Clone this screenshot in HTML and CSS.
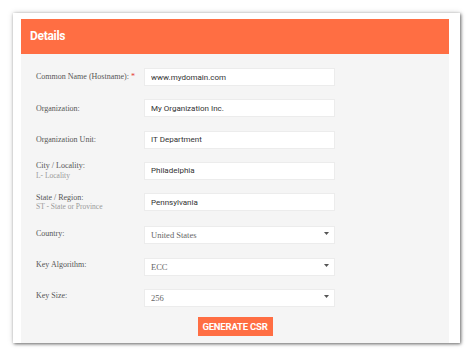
FILE: index.html
```html
<!DOCTYPE html>
<html lang="en">
<head>
    <meta charset="UTF-8">
    <title>Generate CSR</title>
    <link rel="stylesheet" href="styles.css">
</head>
<body>
    <div class="frame">
        <div class="header">Details</div>
        <form class="panel">
            <div class="row">
                <label class="label">Common Name (Hostname): <span class="req">*</span></label>
                <input class="field" type="text" value="www.mydomain.com">
            </div>
            <div class="row">
                <label class="label">Organization:</label>
                <input class="field" type="text" value="My Organization Inc.">
            </div>
            <div class="row">
                <label class="label">Organization Unit:</label>
                <input class="field" type="text" value="IT Department">
            </div>
            <div class="row">
                <label class="label">City / Locality:<small class="hint">L- Locality</small></label>
                <input class="field" type="text" value="Philadelphia">
            </div>
            <div class="row">
                <label class="label">State / Region:<small class="hint">ST - State or Province</small></label>
                <input class="field" type="text" value="Pennsylvania">
            </div>
            <div class="row">
                <label class="label">Country:</label>
                <div class="select-wrap">
                    <select class="field select"><option>United States</option></select>
                    <svg class="arrow" width="5" height="3" viewBox="0 0 5 3"><path d="M0 0h5L2.5 3z" fill="#555"/></svg>
                </div>
            </div>
            <div class="row">
                <label class="label">Key Algorithm:</label>
                <div class="select-wrap">
                    <select class="field select"><option>ECC</option></select>
                    <svg class="arrow" width="5" height="3" viewBox="0 0 5 3"><path d="M0 0h5L2.5 3z" fill="#555"/></svg>
                </div>
            </div>
            <div class="row">
                <label class="label">Key Size:</label>
                <div class="select-wrap">
                    <select class="field select"><option>256</option></select>
                    <svg class="arrow" width="5" height="3" viewBox="0 0 5 3"><path d="M0 0h5L2.5 3z" fill="#555"/></svg>
                </div>
            </div>
            <div class="actions">
                <button class="button" type="button">GENERATE CSR</button>
            </div>
        </form>
    </div>
</body>
</html>
```

FILE: styles.css
```css
/* CSR form card */
body {
    margin: 0;
    padding: 13px;
    background: #fff;
}

.frame {
    width: 428px;
    height: 324px;
    padding: 6px 11px 0 8px;
    background: #fff;
    box-shadow: 1px 1px 3px rgba(0, 0, 0, 0.55), 0 0 6px rgba(0, 0, 0, 0.15);
}

.header {
    height: 35px;
    line-height: 35px;
    padding-left: 9px;
    background-color: #ff6e43;
    color: #fff;
    font-family: Roboto, sans-serif;
    font-weight: bold;
    font-size: 12px;
    letter-spacing: -0.3px;
}

.panel {
    box-sizing: border-box;
    height: 289px;
    margin: 0;
    padding: 14px 0 0 15px;
    background-color: #f5f5f5;
    display: flex;
    flex-direction: column;
    gap: 13.3px;
}

.row {
    display: flex;
    align-items: center;
    height: 18px;
}

.label {
    width: 108px;
    font-family: "Liberation Serif", serif;
    font-size: 8px;
    line-height: 9.5px;
    color: #555;
}

.req {
    color: #e53935;
}

.hint {
    display: block;
    font-size: 7.5px;
    color: #999;
}

.field {
    box-sizing: border-box;
    width: 191px;
    height: 18px;
    margin: 0;
    padding: 0 6px;
    background: #fff;
    border: 1px solid #ececec;
    border-radius: 0;
    font-family: Roboto, sans-serif;
    font-size: 8px;
    color: #333;
    outline: none;
}

.select-wrap {
    position: relative;
    height: 18px;
}

.select {
    appearance: none;
    -webkit-appearance: none;
    font-family: "Liberation Serif", serif;
    font-size: 8.5px;
    color: #666;
}

.arrow {
    position: absolute;
    right: 6px;
    top: 8px;
}

.actions {
    display: flex;
    justify-content: center;
    padding-right: 15px;
    margin-top: -1.3px;
}

.button {
    width: 75px;
    height: 19px;
    padding: 0;
    background-color: #ff6e43;
    border: none;
    border-radius: 0;
    color: #fff;
    font-family: Roboto, sans-serif;
    font-weight: bold;
    font-size: 9.5px;
    letter-spacing: -0.2px;
}
```
